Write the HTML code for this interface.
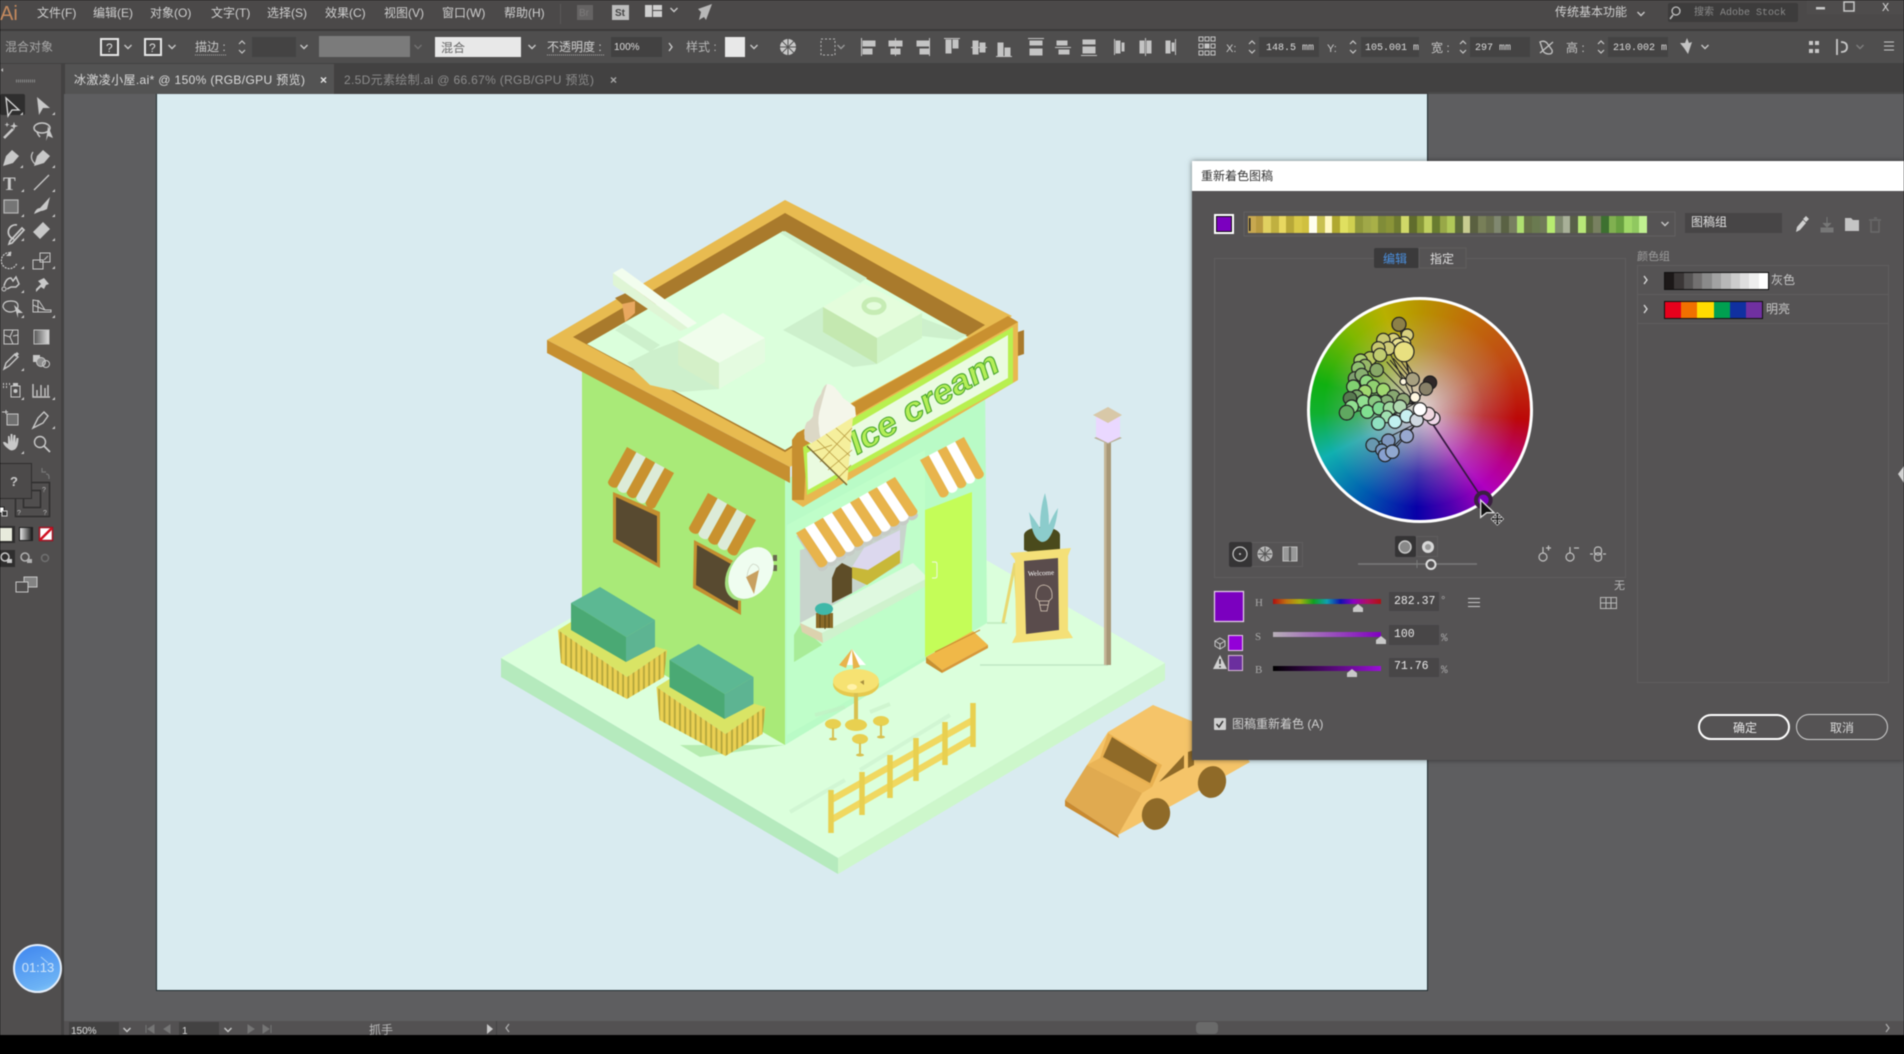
<!DOCTYPE html>
<html><head><meta charset="utf-8"><title>Illustrator</title>
<style>
html,body{margin:0;padding:0;background:#000}
#r{position:relative;width:1904px;height:1054px;overflow:hidden;background:#000;filter:blur(.5px);font-family:"Liberation Sans","Noto Sans CJK SC",sans-serif}
svg{position:absolute;left:0;top:0}
.a{position:absolute}
#bar{position:absolute;left:1248px;top:216px;width:399px;height:17px;display:flex}
#bar i{flex:1;display:block}
#g1,#g2{position:absolute;display:flex;border:1px solid #111}
#g1 i,#g2 i{flex:1;display:block}
text{font-family:"Liberation Sans","Noto Sans CJK SC",sans-serif}
.m{font-family:"Liberation Mono","Noto Sans CJK SC",monospace}
</style></head><body><div id="r">

<svg width="1904" height="1054" viewBox="0 0 1904 1054">
<defs>
<g id="aw"><path d="M0 0h20v85a10 8 0 0 1-20 0z" fill="var(--o)"/><path d="M20 0h20v85a10 8 0 0 1-20 0z" fill="var(--w)"/><path d="M40 0h20v85a10 8 0 0 1-20 0z" fill="var(--o)"/><path d="M60 0h20v85a10 8 0 0 1-20 0z" fill="var(--w)"/><path d="M80 0h20v85a10 8 0 0 1-20 0z" fill="var(--o)"/></g>
<g id="aw2"><path d="M0 0h10v85a5 7 0 0 1-10 0z" fill="var(--o)"/><path d="M10 0h10v85a5 7 0 0 1-10 0z" fill="var(--w)"/><path d="M20 0h10v85a5 7 0 0 1-10 0z" fill="var(--o)"/><path d="M30 0h10v85a5 7 0 0 1-10 0z" fill="var(--w)"/><path d="M40 0h10v85a5 7 0 0 1-10 0z" fill="var(--o)"/><path d="M50 0h10v85a5 7 0 0 1-10 0z" fill="var(--w)"/><path d="M60 0h10v85a5 7 0 0 1-10 0z" fill="var(--o)"/><path d="M70 0h10v85a5 7 0 0 1-10 0z" fill="var(--w)"/><path d="M80 0h10v85a5 7 0 0 1-10 0z" fill="var(--o)"/><path d="M90 0h10v85a5 7 0 0 1-10 0z" fill="var(--w)"/><path d="M100 0h10v85a5 7 0 0 1-10 0z" fill="var(--o)"/></g>
<pattern id="st" width="5.2" height="10" patternUnits="userSpaceOnUse"><rect width="5.2" height="10" fill="#ead052"/><rect x="3.400" width="1.800" height="10" fill="#b4a63c"/></pattern>
<g id="pl">
<polygon points="558,630 571,622 667,650 627,677" fill="#d9e465"/>
<polygon points="558,630 627,677 627,699 561,663" fill="url(#st)"/>
<polygon points="627,677 667,650 664,677 627,699" fill="url(#st)"/>
<polygon points="571,603 600,587 655,620 626,637" fill="#5cb893"/>
<polygon points="571,603 626,637 626,662 571,630" fill="#4aa974"/>
<polygon points="626,637 655,620 655,647 626,662" fill="#5db492"/>
</g>
</defs>
<rect width="1904" height="1035" fill="#5e5e60"/>
<!-- document -->
<rect x="156.500" y="93.500" width="1271" height="897" fill="#d9ebf0" stroke="#1e2a2e"/>
<!-- ground -->
<polygon points="501,658 830,470 1165,663 838,858" fill="#dbffdc"/>
<polygon points="501,658 838,858 838,874 501,677" fill="#b5eabd"/>
<polygon points="838,858 1165,663 1165,680 838,874" fill="#cdf7cb"/>
<polygon points="680,745 785,745 700,757" fill="#b6ecb0"/>
<!-- walls -->
<polygon points="582,370 785,480 785,745 582,627" fill="#a9ea78"/>
<polygon points="785,480 985,375 987,623 785,745" fill="#b9fbc6"/>
<polygon points="787,525 925,450 925,657 787,735" fill="#bffec9"/>
<!-- right wall recess -->
<polygon points="794,635 800,625 822,645 794,662" fill="#a8ec98"/>
<polygon points="800,550 907,523 902,563 800,625" fill="#c8d4cc"/>
<polygon points="852,567 868,570 900,550 900,530 864,548" fill="#dcd8ee"/>
<polygon points="852,567 868,570 900,550 900,563 867,585 852,578" fill="#c8b838"/>
<polygon points="832,603 832,578 836,568 842,563 852,568 852,593" fill="#5e4d28"/>
<polygon points="800,623 913,563 928,578 822,633" fill="#dff9e0"/>
<polygon points="822,633 928,578 928,585 823,643" fill="#cff2cd"/>
<polygon points="800,623 822,633 823,643 802,632" fill="#dcd2ae"/>
<rect x="816" y="613" width="17" height="15" fill="#8a6a28"/><path d="M820 613v15M825 613v16M829 613v15" stroke="#5c4a18" stroke-width="1"/>
<ellipse cx="824" cy="609" rx="9" ry="6" fill="#3fb8a8"/>
<!-- big awning -->
<use href="#aw2" transform="matrix(.9 -.509 .26 .4 796.500 536)" style="--o:#c6cbc6;--w:#c6cbc6"/>
<use href="#aw2" transform="matrix(.9 -.509 .26 .39 796 533)" style="--o:#e8b44c;--w:#fff"/>
<!-- door -->
<polygon points="925,510 972,492 972,632 925,657" fill="#c4fd58"/>
<path d="M932 562h3q2 0 2 2v12q0 2-2 2h-3" fill="none" stroke="#e8f8d0" stroke-width="1.200"/>
<polygon points="926,657 973,631 988,645 942,670" fill="#f0b848"/>
<polygon points="926,657 942,670 942,673 926,663" fill="#c89030"/><polygon points="942,670 988,645 988,648 942,673" fill="#d89838"/>
<path d="M935 652L980 630" stroke="#c89030" stroke-width="1"/>
<!-- small awning -->
<use href="#aw" transform="matrix(.44 -.23 .23 .42 920 460)" style="--o:#e8b44c;--w:#fff"/>
<!-- windows left -->
<polygon points="613,492 660,512 660,568 613,542" fill="#c49030"/><polygon points="616,497 657,516 657,563 616,539" fill="#584a30"/>
<use href="#aw" transform="matrix(.47 .26 -.22 .4 627 447)" style="--o:#c9922f;--w:#dcebd8"/>
<polygon points="694,540 741,565 741,615 693,588" fill="#c49030"/><polygon points="697,545 738,568 738,610 696,585" fill="#584a30"/>
<use href="#aw" transform="matrix(.48 .27 -.22 .4 708 493)" style="--o:#c9922f;--w:#dcebd8"/>
<!-- round sign -->
<rect x="773" y="555" width="4" height="6" fill="#6a6a50"/><rect x="773" y="565" width="4" height="6" fill="#6a6a50"/>
<ellipse cx="748" cy="574" rx="20" ry="29" transform="rotate(33 748 574)" fill="#a5e080"/>
<ellipse cx="751" cy="573" rx="20" ry="28" transform="rotate(33 751 573)" fill="#effdf0"/>
<polygon points="746,577 759,570 754,594" fill="#c8a060"/><path d="M747 577q1-10 6-13q6 1 6 6" fill="none" stroke="#cfd8c8" stroke-width=".8"/>
<!-- roof frame -->
<polygon points="547,340 785,200 1012,316 790,467" fill="#e8bb50"/>
<polygon points="547,340 790,467 790,483 547,353" fill="#c68f30"/>
<polygon points="573,337 785,213 985,325 785,452" fill="#a97a2c"/>
<polygon points="587,344 783,231 968,337 785,450" fill="#dbffdc"/>
<!-- roof shadows -->
<polygon points="780,233 785,231 867,278 860,283" fill="#cdf0cc"/>
<polygon points="922,318 967,335 957,340 922,336" fill="#cdf0cc"/>
<polygon points="627,363 653,350 680,340 719,389 680,392 650,385" fill="#cdf0cc"/>
<polygon points="615,330 625,323 660,345 650,352" fill="#cdf0cc"/>
<polygon points="783,330 823,307 823,332 877,364 853,367" fill="#cdf0cc"/>
<!-- roof boxes -->
<polygon points="622,303 635,300 635,313 625,322" fill="#e8a860"/>
<polygon points="615,298 628,292 636,301 622,304" fill="#a97a2c"/>
<polygon points="613,273 688,328 680,331 613,285" fill="#dff5d5"/>
<polygon points="613,273 622,268 697,323 688,328" fill="#f2fdee"/>
<polygon points="678,340 723,313 765,338 719,363" fill="#f0fdec"/>
<polygon points="678,340 719,363 719,389 678,365" fill="#d4f0c8"/>
<polygon points="719,363 765,338 765,362 719,389" fill="#e4fbe0"/>
<polygon points="823,307 863,283 922,313 877,338" fill="#e4fddc"/>
<polygon points="823,307 877,338 877,364 823,332" fill="#c4e8b0"/>
<polygon points="877,338 922,313 922,338 877,364" fill="#d0f4c8"/>
<ellipse cx="874" cy="306" rx="10" ry="6.500" fill="none" stroke="#c6ecb4" stroke-width="5"/>
<!-- sign -->
<polygon points="1018,332 1024,330 1024,354 1018,356" fill="#a97a2c"/>
<polygon points="797,433 1008,316 1018,322 1018,380 803,507 792,500 792,440" fill="#e8b850"/>
<polygon points="792,440 797,433 853,403 853,415 807,445 804,500 792,500" fill="#c68f30"/>
<polygon points="853,403 1008,316 1018,322 853,417" fill="#c99030"/>
<polygon points="803,447 1013,327 1013,383 807,495" fill="#b8f050"/>
<polygon points="807,453 1008,335 1008,378 808,490" fill="#eafbe0"/>
<text x="857" y="455" font-size="33" font-weight="bold" font-style="italic" textLength="168" lengthAdjust="spacingAndGlyphs" transform="rotate(-30.500 857 455)" fill="#b4ee58" stroke="#46a428" stroke-width="1" style="font-family:'Liberation Sans',sans-serif">Ice cream</text>
<!-- cone -->
<path d="M805 440q-2-12 2-18q4-2 6-6q0-12 8-22q2-8 6-10q6 0 10 6q4 4 6 8q6 4 12 9l1 9L817 447Z" fill="#f4f6ea"/>
<path d="M805 440q-2-12 2-18q4-2 6-6q0-12 8-22q2-8 6-10q-3 10-6 22q-4 12-2 22q0 6 2 11l-6 5Z" fill="#dcd8c6"/>
<polygon points="807,446 853,417 847,485" fill="#f5ef9c"/>
<path d="M817 440L848 470M826 434L850 456M836 428L851 442M812 452L832 445M820 462L852 428M828 470L852 450M836 480L851 465" stroke="#b89a40" stroke-width=".8" fill="none"/>
<path d="M807 446L847 485" stroke="#7a6a30" stroke-width="1.500"/>
<!-- planters -->
<use href="#pl"/><use href="#pl" x="98.500" y="57"/>
<!-- table -->
<path d="M815 715l30-8M870 712l20 -8" stroke="#c4ecc4" stroke-width="4" opacity=".5"/>
<ellipse cx="856" cy="684" rx="23" ry="13" fill="#e6c94e"/><ellipse cx="856" cy="681" rx="23" ry="12" fill="#f6e272"/>
<ellipse cx="852" cy="687" rx="5" ry="3" fill="#fff2a8"/><path d="M864 680l-4 2 4 3z" fill="#a89040"/>
<polygon points="852,649 839,665 866,665" fill="#fff"/><polygon points="852,649 839,665 846,668" fill="#e8b44c"/><polygon points="852,649 853,669 860,667" fill="#e8b44c"/>
<rect x="854" y="693" width="4" height="30" fill="#d8c050"/><ellipse cx="856" cy="725" rx="11" ry="6" fill="#e8d050"/>
<ellipse cx="833" cy="724" rx="8" ry="5" fill="#e8d050"/><rect x="832" y="728" width="2" height="10" fill="#d8c050"/><ellipse cx="833" cy="739" rx="4" ry="1.500" fill="#d8c050"/>
<ellipse cx="881" cy="721" rx="8" ry="5" fill="#e8d050"/><rect x="880" y="725" width="2" height="11" fill="#d8c050"/><ellipse cx="881" cy="737" rx="4" ry="1.500" fill="#d8c050"/>
<ellipse cx="860" cy="739" rx="8" ry="5" fill="#e8d050"/><rect x="859" y="743" width="2" height="11" fill="#d8c050"/><ellipse cx="860" cy="755" rx="4" ry="1.500" fill="#d8c050"/>
<!-- fence -->
<path d="M790 812L845 780M860 770L950 715" stroke="#bfe8c4" stroke-width="4" opacity=".35"/>
<path d="M831 800L973 720M831 820L973 738" stroke="#f0d860" stroke-width="6.500"/>
<path d="M831 790v43M862 772v43M890 755v43M916 738v43M945 722v43M973 703v44" stroke="#e8d050" stroke-width="5.500"/>
<!-- lamp -->
<path d="M980 665H1108" stroke="#bfe8c4" stroke-width="1.500"/><path d="M987 622h20v2h-20z" fill="#c4eec4"/>
<rect x="1104" y="442" width="7" height="223" fill="#a89878"/><rect x="1104" y="442" width="2.500" height="223" fill="#c4b698"/>
<polygon points="1094,438 1108,444 1122,438 1108,432" fill="#b8b098"/>
<polygon points="1096,417 1120,417 1120,437 1108,443 1096,437" fill="#ead8ff"/>
<polygon points="1093,415 1108,407 1122,415 1108,423" fill="#d8c8a8"/>
<!-- plant -->
<ellipse cx="1042" cy="535" rx="18" ry="8" fill="#4a4a1c"/><path d="M1024 535v15q18 8 36 0v-15z" fill="#4a4a1c"/>
<path d="M1042 542q-8-2-11-18l-2-12q6 8 11 16q0-20 5-35q4 16 4 32q4-10 9-17q-2 20-9 30q-3 4-7 4z" fill="#8ccccc"/>
<!-- board -->
<path d="M1015 563L1003 623M1015 563L1018 618" stroke="#e8d870" stroke-width="3"/>
<polygon points="1010,553 1071,548 1068,556 1068,630 1073,638 1012,643 1016,635 1015,560" fill="#f4e078"/>
<polygon points="1024,561 1058,558 1059,630 1026,634" fill="#5a4c4c"/>
<text x="1028" y="576" font-size="7" fill="#fff" transform="rotate(-3 1028 576)" style="font-family:'Liberation Serif',serif">Welcome</text>
<path d="M1036 598q0-13 8-13q9 1 8 13l-3 3h-10zM1039 601l2 10h6l2-10M1040 605h8" fill="none" stroke="#d8c8b8" stroke-width=".8"/>
<!-- car -->
<polygon points="1087,765 1108,732 1153,705 1225,735 1250,762 1213,783 1118,835" fill="#f5c469"/>
<polygon points="1065,800 1087,765 1142,793 1118,835" fill="#e0aa50"/>
<polygon points="1065,800 1118,835 1119,838 1065,806" fill="#c98a30"/>
<polygon points="1087,765 1100,758 1152,787 1142,793" fill="#eab456"/>
<polygon points="1100,758 1108,733 1162,765 1152,787" fill="#e8b050"/>
<polygon points="1103,757 1112,737 1157,765 1150,783" fill="#8f6a28"/>
<polygon points="1159,782 1184,755 1184,768" fill="#8f6a28"/><polygon points="1188,752 1194,750 1194,765 1188,768" fill="#8f6a28"/>
<ellipse cx="1156" cy="814" rx="14" ry="16" transform="rotate(15 1156 814)" fill="#8f6a28"/>
<ellipse cx="1212" cy="782" rx="14" ry="16" transform="rotate(15 1212 782)" fill="#8f6a28"/>
<!-- panel backgrounds -->
<rect x="0" y="0" width="1904" height="29" fill="#4b4949"/>
<rect x="0" y="29" width="1904" height="2" fill="#3b3a3a"/>
<rect x="0" y="31" width="1904" height="32" fill="#4f4e4e"/>
<rect x="0" y="63" width="1904" height="31" fill="#424141"/>
<rect x="65" y="64" width="269" height="30" fill="#535353"/>
<rect x="0" y="64" width="61" height="971" fill="#504e4e"/>
<rect x="61" y="64" width="3" height="971" fill="#434242"/>
<rect x="1428" y="92" width="476" height="2" fill="#4a4a4a"/>
<rect x="64" y="1021" width="1840" height="14" fill="#535152"/>
<rect x="0" y="1035" width="1904" height="19" fill="#000"/>
</svg>

<!-- dialog -->
<div class="a" style="left:1192px;top:161px;width:712px;height:599px;background:#555354;box-shadow:0 0 5px rgba(0,0,0,.5)"></div>
<div class="a" style="left:1192px;top:161px;width:712px;height:30px;background:#fff"></div>
<div class="a" style="left:1307px;top:297px;width:226px;height:226px;border-radius:50%;box-sizing:border-box;border:3px solid #fff;background:radial-gradient(closest-side,rgba(224,214,216,1) 0,rgba(205,190,195,.72) 28%,rgba(190,170,180,.3) 58%,rgba(180,160,170,0) 88%),conic-gradient(#b89400 0deg,#c06c0a 30deg,#c04a14 60deg,#bc0808 95deg,#b80088 122deg,#b000c0 140deg,#5000b0 162deg,#0800a8 182deg,#0060b0 215deg,#10b0b0 244deg,#10b030 268deg,#10b010 285deg,#80b800 318deg,#b8b000 340deg,#b89400 360deg)"></div>
<div id="bar"><i style="background:#c8a850"></i><i style="background:#b89a40"></i><i style="background:#e0d060"></i><i style="background:#c0b040"></i><i style="background:#e8d860"></i><i style="background:#b8a838"></i><i style="background:#d8c848"></i><i style="background:#d0c040"></i><i style="background:#fffff0"></i><i style="background:#c8c050"></i><i style="background:#fff8c0"></i><i style="background:#b0a830"></i><i style="background:#e0e060"></i><i style="background:#d0d050"></i><i style="background:#90983c"></i><i style="background:#a0a848"></i><i style="background:#a8b048"></i><i style="background:#808c38"></i><i style="background:#8a9438"></i><i style="background:#707c30"></i><i style="background:#d0d868"></i><i style="background:#606c2c"></i><i style="background:#889838"></i><i style="background:#c0d060"></i><i style="background:#687c30"></i><i style="background:#98a848"></i><i style="background:#b0c858"></i><i style="background:#5c6a3a"></i><i style="background:#c8cc90"></i><i style="background:#5a6040"></i><i style="background:#787f58"></i><i style="background:#6a7050"></i><i style="background:#808870"></i><i style="background:#5a6244"></i><i style="background:#787f60"></i><i style="background:#b0e070"></i><i style="background:#667048"></i><i style="background:#6a7a50"></i><i style="background:#707a58"></i><i style="background:#b8ec70"></i><i style="background:#808a70"></i><i style="background:#a8b098"></i><i style="background:#585f48"></i><i style="background:#b8e878"></i><i style="background:#5a6a40"></i><i style="background:#788060"></i><i style="background:#3d7030"></i><i style="background:#80b050"></i><i style="background:#68a040"></i><i style="background:#a0d868"></i><i style="background:#90c860"></i><i style="background:#c0f090"></i></div>
<div id="g1" style="left:1664px;top:272px;width:103px;height:16px"><i style="background:#1c1818"></i><i style="background:#3a3636"></i><i style="background:#565454"></i><i style="background:#727070"></i><i style="background:#8a8a8a"></i><i style="background:#a2a2a2"></i><i style="background:#b8b8b8"></i><i style="background:#cccccc"></i><i style="background:#dedede"></i><i style="background:#eeeeee"></i><i style="background:#ffffff"></i></div>
<div id="g2" style="left:1664px;top:301px;width:97px;height:16px"><i style="background:#e8001c"></i><i style="background:#f07000"></i><i style="background:#ffdc00"></i><i style="background:#00a050"></i><i style="background:#1030a0"></i><i style="background:#7030a0"></i></div>
<div class="a" style="left:1273px;top:599px;width:108px;height:5px;background:linear-gradient(90deg,#b01010,#c07010,#a8b010,#10a020,#10a0b0,#1010b0,#9000c0,#b01060,#b01010)"></div>
<div class="a" style="left:1273px;top:632px;width:108px;height:5px;background:linear-gradient(90deg,#b8b0b8,#8000c0)"></div>
<div class="a" style="left:1273px;top:666px;width:108px;height:5px;background:linear-gradient(90deg,#000,#9a10d8)"></div>
<div class="a" style="left:13px;top:944px;width:45px;height:45px;border-radius:50%;border:2px solid #e4eefa;background:linear-gradient(160deg,#3f86ef,#6cb2f5 80%,#8ed0f8)"></div>

<svg width="1904" height="1054" viewBox="0 0 1904 1054">
<defs>
<path id="ch" d="M-3.500 -2L0 1.500L3.500 -2" fill="none" stroke="#c8c8c8" stroke-width="1.400"/>
<path id="sp" d="M-3 -3L0 -6L3 -3M-3 3L0 6L3 3" fill="none" stroke="#c8c8c8" stroke-width="1.200"/>
<path id="tri" d="M0 3L3 0V3Z" fill="#c8c8c8"/>
</defs>
<!-- MENU -->
<text x="0" y="20" font-size="20" fill="#c68a5e">Ai</text>
<g font-size="12" fill="#cfcfcf">
<text x="37" y="17">文件(F)</text><text x="93" y="17">编辑(E)</text><text x="150" y="17">对象(O)</text><text x="211" y="17">文字(T)</text><text x="267" y="17">选择(S)</text><text x="325" y="17">效果(C)</text><text x="384" y="17">视图(V)</text><text x="442" y="17">窗口(W)</text><text x="504" y="17">帮助(H)</text>
</g>
<rect x="560" y="4" width="1" height="20" fill="#5a5858"/>
<rect x="577" y="5" width="16" height="15" fill="#656363"/><text x="579" y="16" font-size="10" fill="#7d7b7b">Br</text>
<rect x="612" y="5" width="17" height="15" fill="#bcbcbc"/><text x="615" y="16" font-size="10" font-weight="bold" fill="#444">St</text>
<path d="M645 5h7v12h-7zM653 5h9v5h-9zM653 11h9v6h-9z" fill="#cfcfcf"/>
<use href="#ch" x="674" y="10"/>
<path d="M712 4L698 9l3 3-2 8 5-3 2 3z" fill="#b8b8b8"/>
<text x="1555" y="16" font-size="12" fill="#d0d0d0">传统基本功能</text>
<use href="#ch" x="1641" y="14"/>
<rect x="1668" y="3" width="130" height="19" rx="2" fill="#3d3c3c"/>
<circle cx="1676" cy="11" r="4" fill="none" stroke="#c0c0c0" stroke-width="1.300"/><path d="M1673 15l-3 4" stroke="#c0c0c0" stroke-width="1.500"/>
<text x="1694" y="15" font-size="10" fill="#8a8a8a" class="m">搜索 Adobe Stock</text>
<rect x="1807" y="0" width="97" height="14" fill="#4e4c4c"/>
<rect x="1816" y="7" width="9" height="2.500" fill="#c8c8c8"/>
<rect x="1844" y="2" width="10" height="9" fill="none" stroke="#c8c8c8" stroke-width="1.500"/>
<text x="1882" y="11" font-size="12" fill="#d8d8d8" class="m">X</text>
<!-- CONTROL -->
<text x="5" y="51" font-size="12" fill="#a8a8a8">混合对象</text>
<rect x="101" y="39" width="17" height="16" fill="#4a4949" stroke="#e8e8e8" stroke-width="2"/><text x="106" y="52" font-size="12" fill="#ddd">?</text><use href="#ch" x="128" y="47"/>
<rect x="145" y="39" width="16" height="16" fill="#4a4949" stroke="#e8e8e8" stroke-width="2"/><text x="149" y="52" font-size="12" fill="#ddd">?</text><use href="#ch" x="172" y="47"/>
<text x="195" y="51" font-size="12" fill="#c8c8c8">描边 :</text><path d="M195 55h32" stroke="#aaa" stroke-dasharray="1 1"/>
<use href="#sp" x="242" y="47"/><rect x="252" y="37" width="44" height="20" fill="#444343"/><use href="#ch" x="304" y="47"/>
<rect x="319" y="36" width="91" height="21" fill="#7b7b7b"/><use href="#ch" x="418" y="47" opacity=".3"/>
<rect x="435" y="37" width="86" height="20" fill="#e8e8e8"/><text x="441" y="52" font-size="12" fill="#666">混合</text><use href="#ch" x="532" y="47"/>
<text x="547" y="51" font-size="12" fill="#d0d0d0">不透明度 :</text><path d="M547 55h57" stroke="#aaa" stroke-dasharray="1 1"/>
<rect x="611" y="37" width="51" height="20" fill="#424141"/><text x="614" y="50" font-size="10" fill="#ddd">100%</text><path d="M669 43l3 4-3 4" fill="none" stroke="#c8c8c8" stroke-width="1.400"/>
<text x="686" y="51" font-size="12" fill="#b8b8b8">样式 :</text>
<rect x="725" y="37" width="20" height="20" fill="#e8e8e8"/><use href="#ch" x="754" y="47"/>
<circle cx="788" cy="47" r="8" fill="#c8c8c8"/><path d="M780 47h16M788 39v16M782 41l12 12M794 41l-12 12" stroke="#555" stroke-width="1"/>
<rect x="821" y="39" width="14" height="16" fill="none" stroke="#b8b8b8" stroke-dasharray="2 2"/><use href="#ch" x="841" y="47" opacity=".6"/>
<g fill="#c4c4c4" stroke="#c4c4c4">
<path d="M861.500 38v18" fill="none"/><rect x="863" y="41" width="12" height="5"/><rect x="863" y="49" width="9" height="5"/>
<path d="M895.500 38v18" fill="none"/><rect x="889" y="41" width="13" height="5"/><rect x="891" y="49" width="9" height="5"/>
<path d="M929.500 38v18" fill="none"/><rect x="917" y="41" width="12" height="5"/><rect x="920" y="49" width="9" height="5"/>
<path d="M944 38.500h16" fill="none"/><rect x="946" y="40" width="5" height="13"/><rect x="953" y="40" width="5" height="8"/>
<path d="M971 47.500h16" fill="none"/><rect x="973" y="41" width="5" height="13"/><rect x="980" y="43" width="5" height="9"/>
<path d="M996 56.500h16" fill="none"/><rect x="998" y="43" width="5" height="13"/><rect x="1005" y="48" width="5" height="8"/>
<path d="M1028 38.500h16M1028 55.500h0" fill="none"/><rect x="1030" y="41" width="12" height="4"/><rect x="1030" y="49" width="12" height="6"/>
<path d="M1055 47.500h16" fill="none"/><rect x="1057" y="41" width="10" height="4"/><rect x="1059" y="50" width="10" height="4"/>
<path d="M1081 55.500h16" fill="none"/><rect x="1083" y="40" width="12" height="4"/><rect x="1083" y="47" width="12" height="6"/>
<path d="M1114.500 39v16" fill="none"/><rect x="1116" y="41" width="4" height="12"/><rect x="1122" y="43" width="2" height="8"/>
<path d="M1145.500 38v18" fill="none"/><rect x="1140" y="41" width="4" height="12"/><rect x="1147" y="41" width="4" height="12"/>
<path d="M1175.500 39v16" fill="none"/><rect x="1166" y="41" width="4" height="12"/><rect x="1172" y="43" width="2" height="8"/>
</g>
<g fill="none" stroke="#c4c4c4" stroke-width="1"><rect x="1199" y="37" width="4" height="4"/><rect x="1205" y="37" width="4" height="4"/><rect x="1211" y="37" width="4" height="4"/><rect x="1199" y="44" width="4" height="4"/><rect x="1205" y="44" width="4" height="4" fill="#c4c4c4"/><rect x="1211" y="44" width="4" height="4"/><rect x="1199" y="51" width="4" height="4"/><rect x="1205" y="51" width="4" height="4"/><rect x="1211" y="51" width="4" height="4"/></g>
<g font-size="11" fill="#c8c8c8"><text x="1226" y="52">X:</text><text x="1327" y="52">Y:</text></g>
<text x="1431" y="52" font-size="12" fill="#c8c8c8">宽 :</text><text x="1566" y="52" font-size="12" fill="#c8c8c8">高 :</text>
<use href="#sp" x="1252" y="47"/><use href="#sp" x="1353" y="47"/><use href="#sp" x="1463" y="47"/><use href="#sp" x="1601" y="47"/>
<rect x="1259" y="37" width="60" height="20" fill="#444343"/><rect x="1361" y="37" width="58" height="20" fill="#444343"/><rect x="1470" y="37" width="60" height="20" fill="#444343"/><rect x="1608" y="37" width="60" height="20" fill="#444343"/>
<g font-size="10" fill="#ddd" class="m"><text x="1266" y="50" class="m">148.5 mm</text><text x="1365" y="50" class="m">105.001 m</text><text x="1475" y="50" class="m">297 mm</text><text x="1613" y="50" class="m">210.002 m</text></g>
<path d="M1540 42q4-2 7 1l5 7q1 4-3 4q-4 0-6-3zM1540 53l13-11" fill="none" stroke="#c4c4c4" stroke-width="1.300"/>
<path d="M1680 43h5l2-5 2 5 3-1-2 6-2 6-4-6z" fill="#c4c4c4"/><use href="#ch" x="1705" y="47"/>
<path d="M1809 41h4v4h-4zM1815 41h4v4h-4zM1809 49h4v4h-4zM1815 49h4v4h-4z" fill="#c8c8c8"/>
<path d="M1837 39v16M1841 42q6 0 6 5q0 5-6 5" fill="none" stroke="#c8c8c8" stroke-width="1.800"/><use href="#ch" x="1860" y="47" opacity=".4"/>
<path d="M1884 42h10M1884 46h10M1884 50h10" stroke="#c8c8c8"/>
<!-- TABS -->
<text x="74" y="84" font-size="12" fill="#dcdcdc" textLength="231">冰激凌小屋.ai* @ 150% (RGB/GPU 预览)</text>
<text x="320" y="84" font-size="12" font-weight="bold" fill="#e8e8e8">×</text>
<text x="344" y="84" font-size="12" fill="#8c8c8c" textLength="250">2.5D元素绘制.ai @ 66.67% (RGB/GPU 预览)</text>
<text x="610" y="84" font-size="12" font-weight="bold" fill="#aaa">×</text>
<path d="M3 68l-2 2 2 2z" fill="#ccc"/><path d="M16 81h20" stroke="#8a8a8a" stroke-width="3" stroke-dasharray="1 1"/>
<!-- TOOLS -->
<rect x="0" y="94" width="25" height="21" rx="2" fill="#2f2e2e"/>
<path d="M6 98L19 110L12 110L8 116Z" fill="none" stroke="#d8d8d8" stroke-width="1.300"/>
<path d="M37 97L50 108L43 108L39 115Z" fill="#c8c8c8"/>
<g fill="#c8c8c8" stroke="none">
<path d="M4 138L13 129" stroke="#c8c8c8" stroke-width="2.600"/><path d="M14 122l1 3 3 1-3 1-1 3-1-3-3-1 3-1zM7 122l.6 2 2 .6-2 .6-.6 2-.6-2-2-.6 2-.6z"/>
<path d="M48 126l5 12-5-2-2 5z"/><ellipse cx="42" cy="128" rx="8" ry="5" fill="none" stroke="#c8c8c8" stroke-width="1.500"/><path d="M37 132q1 3 3 5" fill="none" stroke="#c8c8c8" stroke-width="1.500"/>
<path d="M3 166l3-10 6-6 7 6-6 7zM3 166l5-5" /><path d="M34 166l3-10 6-6 7 6-6 7z"/>
<path d="M33 152q-4 6 2 12" fill="none" stroke="#c8c8c8" stroke-width="1.200"/>
</g>
<text x="3" y="190" font-size="19" font-weight="bold" fill="#c8c8c8" style="font-family:'Liberation Serif',serif">T</text>
<path d="M34 190L49 175" stroke="#c8c8c8" stroke-width="1.300"/>
<rect x="4" y="200" width="14" height="13" fill="#757575" stroke="#b8b8b8" stroke-width="1.200"/>
<path d="M34 214q2-6 6-6l10-11-3 12q-4 2-6 2z" fill="#c8c8c8"/>
<path d="M17 225a7 7 0 1 0 -3 14M10 241l12-13 2 2-12 13-3 1z" fill="none" stroke="#c8c8c8" stroke-width="1.700"/>
<path d="M33 232l10-10 7 7-10 10z" fill="#c8c8c8"/>
<path d="M6 255a8 8 0 1 1 -1 12" transform="translate(10 -1) rotate(150 5 260)" fill="none" stroke="#c8c8c8" stroke-width="1.200" stroke-dasharray="2 1"/><path d="M6 256l5-5v5z" fill="#c8c8c8"/>
<rect x="33" y="260" width="10" height="9" fill="none" stroke="#c8c8c8"/><rect x="40" y="253" width="10" height="9" fill="none" stroke="#c8c8c8"/><path d="M44 260l4-4" stroke="#c8c8c8"/>
<path d="M4 286q2-8 7-8l2 3 3-4 3 7-3 3h-5l-4 2" fill="none" stroke="#c8c8c8" stroke-width="1.500"/><circle cx="4" cy="289" r="2" fill="none" stroke="#c8c8c8"/>
<path d="M36 289l5-5-3-3 6-3 5 6-3 1-2 4-3-2-5 5z" fill="#c8c8c8"/>
<path d="M3 307q0-6 8-6q7 0 7 5q0 5-7 6q-6 0-8-5z" fill="none" stroke="#c8c8c8" stroke-width="1.200"/><path d="M14 305l9 8-5 0 0 5z" fill="#c8c8c8"/>
<path d="M33 300l6 1 6 9h6v2h-18zM33 305l12 5M38 300v12" fill="none" stroke="#c8c8c8"/>
<rect x="4" y="330" width="14" height="14" fill="none" stroke="#c8c8c8"/><path d="M4 335l6 2 3-7M10 337l3 7M13 336l5-1" stroke="#c8c8c8" fill="none"/>
<defs><linearGradient id="gg"><stop offset="0" stop-color="#555"/><stop offset="1" stop-color="#ddd"/></linearGradient><linearGradient id="gg2"><stop offset="0" stop-color="#eee"/><stop offset="1" stop-color="#111"/></linearGradient></defs>
<rect x="34" y="330" width="15" height="14" fill="url(#gg)" stroke="#c0c0c0"/>
<path d="M4 369l2-6 9-9 3 3-9 9z" fill="none" stroke="#c8c8c8" stroke-width="1.400"/><path d="M14 355l3-3 2 2-3 3z" fill="#c8c8c8"/>
<rect x="33" y="355" width="7" height="7" fill="#c8c8c8"/><circle cx="41" cy="362" r="4.500" fill="#8c8c8c" stroke="#c8c8c8"/><circle cx="46" cy="364" r="3.500" fill="none" stroke="#c8c8c8"/>
<path d="M3 384h1M6 384h1M9 384h1M3 387h1M6 387h1" stroke="#c8c8c8" stroke-width="2"/><rect x="11" y="386" width="9" height="11" fill="none" stroke="#c8c8c8"/><rect x="13" y="383" width="5" height="3" fill="#c8c8c8"/><circle cx="15.500" cy="391" r="2" fill="#c8c8c8"/>
<path d="M33 384v13h17M37 390v6M41 385v11M45 388v8M48 385v11" fill="none" stroke="#c8c8c8" stroke-width="1.400"/>
<path d="M2 412h6M6 410v4" stroke="#c8c8c8"/><rect x="7" y="414" width="11" height="11" fill="#707070" stroke="#c8c8c8"/>
<path d="M33 428l5-10 6-6 4 4-5 7z" fill="none" stroke="#c8c8c8" stroke-width="1.400"/>
<path d="M6 447q-3-3-3-5l2 0 3 2 0-8 1.500 0 1 6 0-8 2 0 0 8 1-7 2 0 0 8 1-5 2 0q0 8-3 11q-4 3-7 0z" fill="#c8c8c8"/>
<circle cx="40" cy="442" r="5.500" fill="none" stroke="#c8c8c8" stroke-width="1.400"/><path d="M44 446l6 6" stroke="#c8c8c8" stroke-width="1.800"/>
<g fill="#c8c8c8"><use href="#tri" x="20" y="112"/><use href="#tri" x="52" y="112"/><use href="#tri" x="20" y="165"/><use href="#tri" x="52" y="165"/><use href="#tri" x="21" y="189"/><use href="#tri" x="52" y="189"/><use href="#tri" x="21" y="214"/><use href="#tri" x="52" y="214"/><use href="#tri" x="21" y="238"/><use href="#tri" x="52" y="238"/><use href="#tri" x="21" y="266"/><use href="#tri" x="52" y="266"/><use href="#tri" x="21" y="290"/><use href="#tri" x="52" y="315"/><use href="#tri" x="21" y="315"/><use href="#tri" x="21" y="368"/><use href="#tri" x="21" y="397"/><use href="#tri" x="52" y="397"/><use href="#tri" x="52" y="426"/><use href="#tri" x="21" y="451"/></g>
<!-- fill/stroke -->
<rect x="15.500" y="482.500" width="34" height="34" fill="#504e4e" stroke="#2f2e2e" stroke-width="1.500"/>
<rect x="23.500" y="490.500" width="17" height="17" fill="#504e4e" stroke="#2f2e2e" stroke-width="1.500"/>
<rect x="-1" y="463.500" width="32.500" height="35" fill="#4c4a4a" stroke="#2f2e2e"/>
<text x="10" y="486" font-size="13" font-weight="bold" fill="#c8c8c8">?</text>
<text x="42" y="492" font-size="7" fill="#b8b8b8">?</text><text x="17" y="515" font-size="7" fill="#b8b8b8">?</text><text x="43" y="515" font-size="7" fill="#b8b8b8">?</text>
<path d="M42 468v4h4M46 474q3 0 3 3v2" fill="none" stroke="#777" stroke-width="1.200"/>
<rect x="-2" y="507" width="6" height="6" fill="#fff" stroke="#222"/><rect x="2" y="511" width="5" height="5" fill="#333" stroke="#ccc"/>
<rect x="0" y="526" width="15" height="17" fill="#2f2e2e"/><rect x="0" y="528" width="12" height="13" fill="#e8ebdc"/>
<rect x="19.500" y="527.500" width="13" height="13" fill="url(#gg2)" stroke="#222"/>
<rect x="39.500" y="527.500" width="13" height="13" fill="#fff" stroke="#a01020" stroke-width="1.500"/><path d="M40 540L52 528" stroke="#d01020" stroke-width="2.500"/>
<rect x="0" y="550" width="15" height="17" fill="#2f2e2e"/>
<circle cx="5" cy="557" r="4" fill="none" stroke="#c8c8c8" stroke-width="1.500"/><rect x="7" y="559" width="5" height="4" fill="#c8c8c8"/>
<circle cx="25" cy="557" r="4" fill="none" stroke="#b0b0b0" stroke-width="1.500"/><rect x="27" y="559" width="5" height="4" fill="#b0b0b0"/>
<circle cx="45" cy="558" r="3.500" fill="none" stroke="#707070" stroke-width="1.500"/>
<rect x="24" y="577" width="13" height="10" fill="#838383" stroke="#c8c8c8"/><rect x="16" y="582" width="12" height="10" fill="#504e4e" stroke="#c8c8c8"/>
<!-- DIALOG CONTENT -->
<text x="1201" y="180" font-size="12" fill="#333">重新着色图稿</text>
<rect x="1214" y="214" width="20" height="20" fill="#fff"/><rect x="1216" y="216" width="16" height="16" fill="#111"/><rect x="1217" y="217" width="14" height="14" fill="#7b00bf"/>
<rect x="1244" y="212" width="431" height="24" fill="none" stroke="#626061"/>
<rect x="1249" y="218" width="1.500" height="13" fill="#222"/>
<use href="#ch" x="1665" y="224"/>
<rect x="1685" y="213" width="97" height="20" fill="#474546"/>
<text x="1691" y="226" font-size="12" fill="#e0e0e0">图稿组</text>
<path d="M1796 232l1-5 6-7 3 3-6 7zM1803 219l3-3 3 3-3 3z" fill="#d0d0d0"/>
<path d="M1827 217v6M1823 223l4 4 4-4M1821 228h12v4h-12z" stroke="#777" fill="#777"/>
<path d="M1845 218h6l2 2h6v11h-14z" fill="#c4c4c4"/>
<path d="M1869 220h12M1871 221v11h8v-11M1874 218h3" fill="none" stroke="#6a6a6a" stroke-width="1.400"/>
<!-- tabs in dialog -->
<rect x="1214.500" y="258.500" width="411" height="319" fill="none" stroke="#5f5d5e"/>
<rect x="1374" y="248" width="45" height="20" rx="2" fill="#3b3a3b"/><rect x="1419" y="248" width="47" height="20" fill="#555354" stroke="#5f5d5e"/>
<text x="1383" y="263" font-size="12" fill="#4a90e0">编辑</text><text x="1430" y="263" font-size="12" fill="#e0e0e0">指定</text>
<text x="1637" y="260" font-size="11" fill="#9e9e9e">颜色组</text>
<rect x="1637.500" y="265.500" width="251" height="417" fill="none" stroke="#5f5d5e"/>
<path d="M1638 294.500h250M1638 323.500h250" stroke="#5f5d5e"/>
<path d="M1644 276l3 4-3 4M1644 305l3 4-3 4" fill="none" stroke="#d8d8d8" stroke-width="1.400"/>
<text x="1771" y="284" font-size="12" fill="#c8c8c8">灰色</text><text x="1766" y="313" font-size="12" fill="#c8c8c8">明亮</text>
<path d="M1904 466l-6 8 6 9z" fill="#d0d0d0"/>
<!-- wheel dots -->
<g transform="translate(1290 290) scale(.33333)" stroke="#1f1f1f" stroke-width="3.500">
<path d="M375 340L327 103M375 340L342 185M375 340L280 150M375 340L240 205M375 340L195 265M375 340L180 320M375 340L170 368M375 340L265 400M380 400L248 465M380 400L285 495M380 400L307 485M380 400L350 438M375 340L420 278M300 210L350 270M310 205L358 262M322 198L362 255M335 195L368 248M290 215L342 275" fill="none" stroke-width="3"/>
<path d="M430 405L578 628" stroke="#34183f" stroke-width="5" fill="none"/>
<g>
<circle cx="352" cy="135" r="18" fill="#d8d080"/><circle cx="310" cy="150" r="20" fill="#d8d080"/><circle cx="342" cy="160" r="20" fill="#e4dc88"/><circle cx="325" cy="165" r="20" fill="#e8e090"/><circle cx="280" cy="150" r="20" fill="#c8c870"/><circle cx="295" cy="175" r="20" fill="#d0cc78"/><circle cx="265" cy="175" r="20" fill="#c8c870"/><circle cx="342" cy="185" r="30" fill="#e8e080"/><circle cx="327" cy="103" r="21" fill="#8c8048"/>
<circle cx="240" cy="205" r="20" fill="#b8c860"/><circle cx="270" cy="195" r="20" fill="#c0cc70"/><circle cx="212" cy="212" r="20" fill="#a8d070"/><circle cx="225" cy="228" r="20" fill="#98b868"/><circle cx="205" cy="235" r="20" fill="#90c070"/><circle cx="260" cy="240" r="20" fill="#88a868"/><circle cx="195" cy="265" r="20" fill="#80a070"/><circle cx="215" cy="255" r="20" fill="#88b070"/><circle cx="230" cy="275" r="20" fill="#90d880"/><circle cx="190" cy="290" r="20" fill="#80d070"/><circle cx="250" cy="290" r="20" fill="#90d070"/><circle cx="280" cy="300" r="20" fill="#a0d870"/><circle cx="225" cy="305" r="20" fill="#a0d870"/><circle cx="200" cy="320" r="20" fill="#78a868"/><circle cx="180" cy="325" r="20" fill="#587a50"/><circle cx="310" cy="320" r="20" fill="#88a870"/><circle cx="340" cy="330" r="20" fill="#90a878"/><circle cx="290" cy="335" r="20" fill="#88b078"/><circle cx="220" cy="335" r="20" fill="#90e090"/><circle cx="255" cy="335" r="20" fill="#88c880"/><circle cx="185" cy="350" r="20" fill="#90e090"/><circle cx="170" cy="368" r="22" fill="#60a860"/><circle cx="232" cy="365" r="20" fill="#80e090"/><circle cx="268" cy="355" r="20" fill="#80d890"/><circle cx="300" cy="355" r="20" fill="#a0d8a0"/><circle cx="330" cy="350" r="20" fill="#b0d8b0"/><circle cx="290" cy="380" r="18" fill="#a0e0b0"/><circle cx="265" cy="400" r="20" fill="#90e0c0"/><circle cx="315" cy="395" r="20" fill="#c0f0f0"/><circle cx="350" cy="378" r="20" fill="#c8f0f0"/><circle cx="380" cy="390" r="20" fill="#d0d8e0"/><circle cx="430" cy="385" r="20" fill="#f0d8e8"/><circle cx="415" cy="372" r="20" fill="#f0d8e0"/><circle cx="390" cy="358" r="20" fill="#fff"/><circle cx="375" cy="322" r="15" fill="#fff8e0"/><circle cx="340" cy="275" r="10" fill="#fff8e0"/><circle cx="420" cy="278" r="20" fill="#302828"/><circle cx="408" cy="296" r="20" fill="#888068"/><circle cx="368" cy="268" r="20" fill="#a8a080"/>
<circle cx="350" cy="438" r="20" fill="#98a8d0"/><circle cx="295" cy="452" r="20" fill="#8098c0"/><circle cx="248" cy="465" r="20" fill="#6898b0"/><circle cx="275" cy="480" r="18" fill="#7898c0"/><circle cx="285" cy="495" r="20" fill="#88a0d0"/><circle cx="307" cy="485" r="20" fill="#90a8d0"/>
</g>
<circle cx="580" cy="630" r="22" fill="#7d00bd" stroke="#3a2040" stroke-width="12"/>
<path d="M572 630L572 682L590 668L612 668Z" fill="#111" stroke="#ddd" stroke-width="4"/>
<path d="M622 668l8 8h-5v8h8v-5l8 8-8 8v-5h-8v8h5l-8 8-8-8h5v-8h-8v5l-8-8 8-8v5h8v-8h-5z" fill="#111" stroke="#ddd" stroke-width="2"/>
</g>
<!-- wheel controls -->
<rect x="1229.500" y="542.500" width="73" height="24" fill="none" stroke="#5f5d5e"/>
<rect x="1229" y="542" width="23" height="25" rx="2" fill="#353435"/>
<circle cx="1240" cy="554" r="7" fill="none" stroke="#c8c8c8" stroke-width="1.200"/><circle cx="1240" cy="554" r="1" fill="#c8c8c8"/>
<circle cx="1265" cy="554" r="7" fill="#b0b0b0" stroke="#c8c8c8"/><path d="M1258 554h14M1265 547v14M1260 549l10 10M1270 549l-10 10" stroke="#555"/>
<rect x="1283" y="547" width="14" height="14" fill="#999" stroke="#c0c0c0"/><rect x="1289" y="547" width="2" height="14" fill="#555"/>
<rect x="1395" y="536" width="21" height="21" rx="2" fill="#353435"/><rect x="1416.500" y="536.500" width="21" height="20" fill="none" stroke="#5f5d5e"/>
<circle cx="1405" cy="547" r="6" fill="#888" stroke="#c8c8c8" stroke-width="1.500"/><circle cx="1428" cy="547" r="6" fill="#d8d8d8"/><circle cx="1428" cy="547" r="3" fill="#999"/>
<path d="M1358 564h119" stroke="#7a7a7a" stroke-width="1.500"/><path d="M1417 560v8" stroke="#7a7a7a"/>
<circle cx="1431" cy="564.500" r="4.500" fill="#555354" stroke="#e0e0e0" stroke-width="2"/>
<g fill="none" stroke="#c0c0c0" stroke-width="1.200"><circle cx="1543" cy="557" r="4"/><path d="M1543 553v-6M1546 548h5M1548.500 545.500v5"/><circle cx="1570" cy="557" r="4"/><path d="M1570 553v-6M1574 548h5"/><rect x="1594.500" y="547" width="7" height="8" rx="3"/><rect x="1594.500" y="553" width="7" height="8" rx="3"/><path d="M1590 554h3M1603 554h3"/></g>
<text x="1614" y="589" font-size="11" fill="#b8b8b8">无</text>
<rect x="1600.500" y="597.500" width="16" height="11" fill="none" stroke="#b8b8b8"/><path d="M1600 603h17M1606 597v11M1611 597v11" stroke="#b8b8b8"/>
<!-- HSB -->
<rect x="1214.500" y="591.500" width="29" height="30" fill="#7b00bf" stroke="#e8d0ee" stroke-width="1.200"/>
<rect x="1228.500" y="635.500" width="14" height="15" fill="#9300d8" stroke="#e8c8ee"/>
<rect x="1228.500" y="655.500" width="14" height="15" fill="#6b2f9e" stroke="#d8b8d8"/>
<path d="M1220 638l5 3v5l-5 3-5-3v-5zM1215 641l5 3 5-3M1220 644v5" fill="none" stroke="#c8c8c8"/>
<path d="M1220 655l7 14h-14z" fill="#d0d0d0"/><path d="M1220 659v5M1220 666v1.500" stroke="#333" stroke-width="1.500"/>
<g font-size="11" fill="#a8a8a8" style="font-family:'Liberation Serif',serif"><text x="1255" y="606" style="font-family:'Liberation Serif',serif">H</text><text x="1255" y="640" style="font-family:'Liberation Serif',serif">S</text><text x="1255" y="673" style="font-family:'Liberation Serif',serif">B</text></g>
<path d="M1358 604l5 4v4h-10v-4z" fill="#c8c8c8"/><path d="M1381 636l5 4v4h-10v-4z" fill="#c8c8c8"/><path d="M1352 669l5 4v4h-10v-4z" fill="#c8c8c8"/>
<rect x="1389" y="592" width="50" height="19" fill="#484647"/><rect x="1389" y="625" width="50" height="20" fill="#484647"/><rect x="1389" y="658" width="50" height="19" fill="#484647"/>
<text x="1394" y="604" font-size="11.500" fill="#e8e8e8" class="m">282.37</text><text x="1394" y="637" font-size="11.500" fill="#e8e8e8" class="m">100</text><text x="1394" y="669" font-size="11.500" fill="#e8e8e8" class="m">71.76</text>
<text x="1441" y="604" font-size="11" fill="#a8a8a8">°</text><text x="1441" y="641" font-size="11" fill="#a8a8a8" class="m">%</text><text x="1441" y="673" font-size="11" fill="#a8a8a8" class="m">%</text>
<path d="M1468 598.500h12M1468 602.500h12M1468 606.500h12" stroke="#c8c8c8"/>
<!-- bottom dialog -->
<rect x="1214" y="718" width="12" height="12" rx="1" fill="#d0d0d0"/><path d="M1216.500 724l2.500 3 4-6" fill="none" stroke="#333" stroke-width="1.500"/>
<text x="1232" y="728" font-size="12" fill="#d0d0d0">图稿重新着色 (A)</text>
<rect x="1699" y="715" width="90" height="24" rx="12" fill="#555354" stroke="#fff" stroke-width="2"/>
<text x="1733" y="732" font-size="12" fill="#e8e8e8">确定</text>
<rect x="1796.500" y="714.500" width="91" height="25" rx="12.500" fill="#555354" stroke="#d0d0d0"/>
<text x="1830" y="732" font-size="12" fill="#d8d8d8">取消</text>
<!-- timer -->
<text x="38" y="972" font-size="13" fill="#cfe4f8" text-anchor="middle">01:13</text>
<path d="M41 957l7 6" stroke="#a8d0f8" stroke-width="1"/>
<!-- STATUS -->
<rect x="69" y="1022" width="50" height="13" fill="#434242"/><text x="71" y="1034" font-size="10" fill="#ddd">150%</text>
<use href="#ch" x="127" y="1030"/>
<path d="M146 1025v8M154 1025l-6 4 6 4zM170 1025l-6 4 6 4z" fill="#757575" stroke="#757575"/>
<rect x="179" y="1022" width="40" height="13" fill="#434242"/><text x="182" y="1034" font-size="10" fill="#ddd">1</text>
<use href="#ch" x="228" y="1030"/>
<path d="M248 1025l6 4-6 4zM263 1025l6 4-6 4zM271 1025v8" fill="#757575" stroke="#757575"/>
<text x="369" y="1034" font-size="12" fill="#b8b8b8">抓手</text>
<path d="M487 1024l6 5-6 5z" fill="#c8c8c8"/>
<path d="M509 1024l-3 4 3 4" fill="none" stroke="#b0b0b0" stroke-width="1.200"/>
<rect x="496" y="1021" width="1" height="14" fill="#444"/>
<rect x="1196" y="1022" width="22" height="12" rx="4" fill="#6a6a6a"/>
<path d="M1886 1024l3 4-3 4" fill="none" stroke="#b0b0b0" stroke-width="1.200"/>
</svg>
</div></body></html>
